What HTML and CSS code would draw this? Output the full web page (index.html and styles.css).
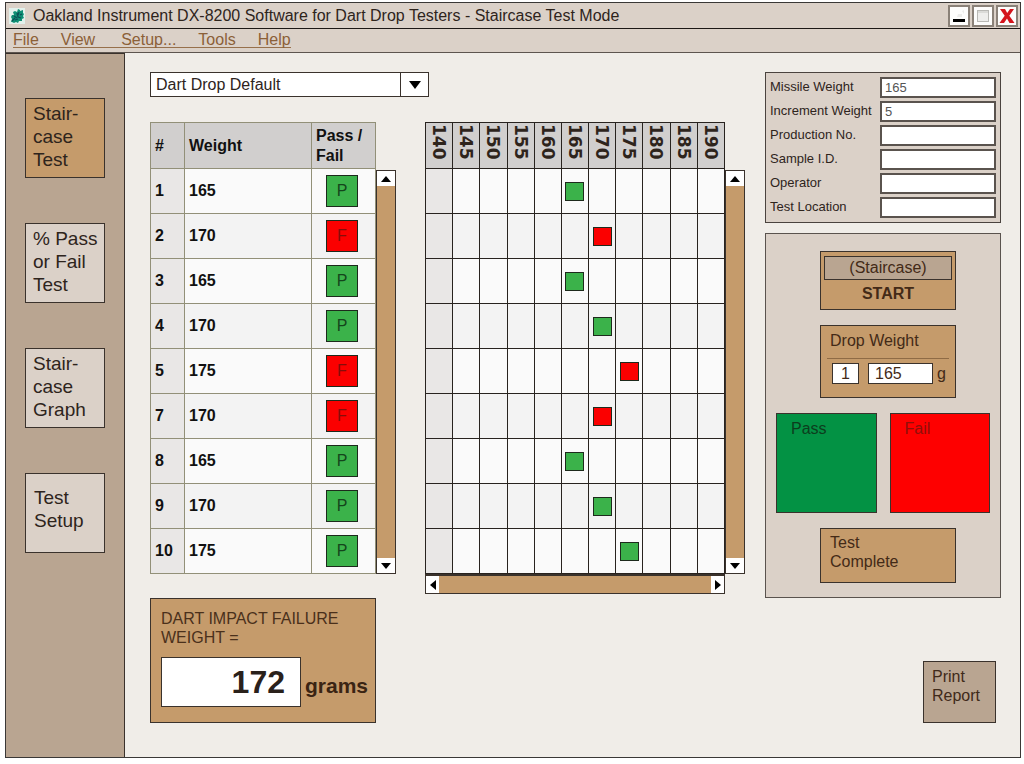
FILE: index.html
```html
<!DOCTYPE html>
<html lang="en">
<head>
<meta charset="utf-8">
<title>Oakland Instrument DX-8200</title>
<link rel="stylesheet" href="styles.css">
</head>
<body>
<div class="window">
  <header class="titlebar">
    <svg class="logo" viewBox="0 0 16 16" aria-hidden="true"><rect width="16" height="16" fill="#e2f1ec"/><path d="M2 14l1-3-1-2 1-2 2 0-1-3 2-1 2 1 1-3 2 1 0 1 3-1 0 3 1 1-1 2 1 2-2 1 0 2-3 0-1 2-2-1-2 1-2-1z" fill="#0e8f74"/><path d="M3 13l3-3M5 8l3 2M8 5l1 4 3 1M10 4l-1 3M6 12l3-1M11 7l2-1" stroke="#0a4f55" stroke-width="1.300" fill="none"/></svg>
    <h1 class="title">Oakland Instrument DX-8200 Software for Dart Drop Testers - Staircase Test Mode</h1>
    <div class="window-buttons">
      <button class="window-button" aria-label="Minimize"><svg viewBox="0 0 18 18"><path d="M8 7h4v3H7zM12 4l2-1v4" fill="#ececea"/><rect x="3" y="12" width="12" height="3" fill="#000"/></svg></button>
      <button class="window-button" aria-label="Maximize"><svg viewBox="0 0 18 18"><rect x="3.5" y="3.5" width="11" height="11" fill="#eeeeec" stroke="#b9b9b5"/><path d="M4 5h10" stroke="#c8c8c4"/></svg></button>
      <button class="window-button" aria-label="Close"><svg viewBox="0 0 18 18"><path d="M2 2h5l2.200 4L12 2h4l-4.700 6.700L16.500 16h-5l-2.500-4.500L6 16H1.500l5.200-7.300z" fill="#d4141c"/></svg></button>
    </div>
  </header>
  <nav class="menubar">
    <div class="menu-items">
      <a href="#">File</a><a href="#">View</a><a class="group-start" href="#">Setup...</a><a href="#">Tools</a><a href="#">Help</a>
    </div>
  </nav>
  <div class="body">
    <aside class="sidebar">
      <button class="mode active">Stair-<br>case<br>Test</button>
      <button class="mode">% Pass<br>or Fail<br>Test</button>
      <button class="mode">Stair-<br>case<br>Graph</button>
      <button class="mode two-line">Test<br>Setup</button>
    </aside>
    <main class="workspace">
      <section class="test">
        <div class="preset">
          <select aria-label="Test preset"><option>Dart Drop Default</option></select>
          <span class="preset-arrow"><svg viewBox="0 0 14 10"><path d="M1 1h12L7 9z"/></svg></span>
        </div>
        <div class="data">
          <div class="results">
            <table class="drops">
              <thead><tr><th class="col-number">#</th><th>Weight</th><th class="col-outcome">Pass / Fail</th></tr></thead>
              <tbody>
                <tr><th>1</th><td>165</td><td><span class="tile pass">P</span></td></tr>
                <tr><th>2</th><td>170</td><td><span class="tile fail">F</span></td></tr>
                <tr><th>3</th><td>165</td><td><span class="tile pass">P</span></td></tr>
                <tr><th>4</th><td>170</td><td><span class="tile pass">P</span></td></tr>
                <tr><th>5</th><td>175</td><td><span class="tile fail">F</span></td></tr>
                <tr><th>7</th><td>170</td><td><span class="tile fail">F</span></td></tr>
                <tr><th>8</th><td>165</td><td><span class="tile pass">P</span></td></tr>
                <tr><th>9</th><td>170</td><td><span class="tile pass">P</span></td></tr>
                <tr><th>10</th><td>175</td><td><span class="tile pass">P</span></td></tr>
              </tbody>
            </table>
            <div class="scroll vertical">
              <button aria-label="Scroll up"><svg viewBox="0 0 10 8"><path d="M0 7h10L5 1z"/></svg></button>
              <button aria-label="Scroll down"><svg viewBox="0 0 10 8"><path d="M0 1h10L5 7z"/></svg></button>
            </div>
          </div>
          <div class="chart">
            <div class="plot">
              <table class="stairs">
                <thead><tr><th><span>140</span></th><th><span>145</span></th><th><span>150</span></th><th><span>155</span></th><th><span>160</span></th><th><span>165</span></th><th><span>170</span></th><th><span>175</span></th><th><span>180</span></th><th><span>185</span></th><th><span>190</span></th></tr></thead>
                <tbody>
                  <tr><td></td><td></td><td></td><td></td><td></td><td><i class="mark pass"></i></td><td></td><td></td><td></td><td></td><td></td></tr>
                  <tr><td></td><td></td><td></td><td></td><td></td><td></td><td><i class="mark fail"></i></td><td></td><td></td><td></td><td></td></tr>
                  <tr><td></td><td></td><td></td><td></td><td></td><td><i class="mark pass"></i></td><td></td><td></td><td></td><td></td><td></td></tr>
                  <tr><td></td><td></td><td></td><td></td><td></td><td></td><td><i class="mark pass"></i></td><td></td><td></td><td></td><td></td></tr>
                  <tr><td></td><td></td><td></td><td></td><td></td><td></td><td></td><td><i class="mark fail"></i></td><td></td><td></td><td></td></tr>
                  <tr><td></td><td></td><td></td><td></td><td></td><td></td><td><i class="mark fail"></i></td><td></td><td></td><td></td><td></td></tr>
                  <tr><td></td><td></td><td></td><td></td><td></td><td><i class="mark pass"></i></td><td></td><td></td><td></td><td></td><td></td></tr>
                  <tr><td></td><td></td><td></td><td></td><td></td><td></td><td><i class="mark pass"></i></td><td></td><td></td><td></td><td></td></tr>
                  <tr><td></td><td></td><td></td><td></td><td></td><td></td><td></td><td><i class="mark pass"></i></td><td></td><td></td><td></td></tr>
                </tbody>
              </table>
              <div class="scroll horizontal">
                <button aria-label="Scroll left"><svg viewBox="0 0 8 10"><path d="M7 0v10L1 5z"/></svg></button>
                <button aria-label="Scroll right"><svg viewBox="0 0 8 10"><path d="M1 0v10l6-5z"/></svg></button>
              </div>
            </div>
            <div class="scroll vertical">
              <button aria-label="Scroll up"><svg viewBox="0 0 10 8"><path d="M0 7h10L5 1z"/></svg></button>
              <button aria-label="Scroll down"><svg viewBox="0 0 10 8"><path d="M0 1h10L5 7z"/></svg></button>
            </div>
          </div>
        </div>
        <div class="impact">
          <label for="impact">DART IMPACT FAILURE WEIGHT =</label>
          <div class="impact-value"><input id="impact" value="172" readonly><span>grams</span></div>
        </div>
      </section>
      <section class="side">
        <form class="details">
          <label for="missile">Missile Weight</label><input id="missile" value="165">
          <label for="increment">Increment Weight</label><input id="increment" value="5">
          <label for="production">Production No.</label><input id="production">
          <label for="sample">Sample I.D.</label><input id="sample">
          <label for="operator">Operator</label><input id="operator">
          <label for="location">Test Location</label><input id="location">
        </form>
        <div class="controls">
          <button class="start"><span class="start-mode">(Staircase)</span><strong>START</strong></button>
          <div class="drop">
            <div class="drop-title" id="drop-title">Drop Weight</div>
            <div class="drop-fields">
              <input class="drop-number" aria-label="Drop number" value="1">
              <input class="drop-weight" aria-labelledby="drop-title" value="165">
              <span>g</span>
            </div>
          </div>
          <div class="verdict">
            <button class="verdict-pass">Pass</button>
            <button class="verdict-fail">Fail</button>
          </div>
          <button class="complete">Test<br>Complete</button>
        </div>
        <button class="print">Print<br>Report</button>
      </section>
    </main>
  </div>
</div>
</body>
</html>
```
FILE: styles.css
```css
* { box-sizing: border-box; }

body {
  margin: 0;
  background: #fff;
  color: #2e241c;
  font: 16px/19px "Liberation Sans", Arial, sans-serif;
}

button, input, select {
  margin: 0;
  border: 1px solid #3a322c;
  border-radius: 0;
  padding: 0;
  color: inherit;
  font: inherit;
}

svg { display: block; }

.window {
  display: flex;
  flex-direction: column;
  min-height: calc(100vh - 8px);
  margin: 2px 3px 0 5px;
  border: 1px solid #3a3836;
  background: #f0ede8;
}

.titlebar {
  display: flex;
  align-items: center;
  height: 26px;
  padding: 0 2px 0 3px;
  border-bottom: 1px solid #1c1815;
  background: #dbd1c8;
}

.logo { width: 16px; height: 16px; }

.title {
  flex: 1;
  margin: 0 0 0 8px;
  font-size: 16px;
  font-weight: 400;
}

.window-buttons { display: flex; gap: 2px; }

.window-button {
  width: 22px;
  height: 22px;
  border: 2px solid #8a8178;
  background: #fdfdfc;
}

.menubar {
  height: 24px;
  padding: 1px 7px;
  border-bottom: 1px solid #5d554f;
  background: #dbd1c8;
}

.menu-items {
  display: inline-flex;
  gap: 22px;
  height: 18px;
  border-bottom: 1px solid #97704b;
}

.menu-items a { color: #8b6038; text-decoration: none; }
.menu-items .group-start { padding-left: 4px; }

.body { display: flex; flex: 1; }

.sidebar {
  display: flex;
  flex-direction: column;
  align-items: center;
  gap: 45px;
  width: 119px;
  padding: 44px 0;
  border-top: 1px solid #3a322c;
  border-right: 1px solid #3a322c;
  background: #b9a591;
}

.mode {
  display: flex;
  align-items: flex-start;
  width: 80px;
  height: 80px;
  padding: 3px 7px;
  background: #dbd1c8;
  font-size: 19px;
  line-height: 23px;
  text-align: left;
  white-space: nowrap;
}

.mode.active { background: #c59b6b; }
.mode.two-line { padding: 12px 8px; }

.workspace {
  display: flex;
  flex: 1;
  gap: 20px;
  padding: 19px 19px 34px 25px;
}

.test { flex: 1; }

.preset { position: relative; width: 279px; height: 25px; }

.preset select {
  width: 100%;
  height: 100%;
  padding: 0 5px;
  appearance: none;
  background: #fff;
}

.preset-arrow {
  position: absolute;
  top: 1px;
  right: 1px;
  bottom: 1px;
  display: flex;
  align-items: center;
  justify-content: center;
  width: 28px;
  border-left: 1px solid #3a322c;
  background: #fff;
  pointer-events: none;
}

.preset-arrow svg { width: 14px; height: 10px; }

.data {
  display: grid;
  grid-template-columns: 246fr 320fr;
  gap: 29px;
  margin-top: 25px;
}

.results, .chart { display: flex; align-items: flex-start; }

table { width: 100%; border-collapse: collapse; table-layout: fixed; }

thead tr { height: 46px; }
tbody tr { height: 45px; }

.drops th, .drops td {
  padding: 0 4px;
  border: 1px solid #929078;
  color: #111;
  font-weight: 700;
  line-height: 20px;
  text-align: left;
}

.drops tbody td { background: #fafafa; }
.drops tbody tr:nth-child(even) td { background: #f3f3f3; }
.drops tbody th { background: #e9e7e6; }
.drops thead th { background: #d1cfce; }
.drops .col-number { width: 34px; }
.drops .col-outcome { width: 64px; }

.tile {
  display: flex;
  align-items: center;
  justify-content: center;
  width: 32px;
  height: 32px;
  margin: 0 10px;
  border: 1px solid #1d2a1c;
  font-weight: 400;
}

.pass { background: #3bb24a; color: #14451b; }
.fail { background: #fb0000; color: #860d0a; }

.scroll {
  display: flex;
  justify-content: space-between;
  border: 1px solid #3a322c;
  background: #c59b6b;
}

.scroll button {
  display: flex;
  align-items: center;
  justify-content: center;
  border: 0;
  background: #fff;
}

.vertical {
  flex: none;
  flex-direction: column;
  width: 20px;
  height: 404px;
  margin-top: 48px;
}

.vertical button { height: 15px; }
.vertical svg { width: 10px; height: 8px; }
.horizontal { height: 20px; border-top-width: 2px; }
.horizontal button { width: 13px; }
.horizontal svg { width: 8px; height: 10px; }

.plot { flex: 1; }

.stairs th, .stairs td { padding: 0; border: 1px solid #28231f; }
.stairs th { background: #d1cfce; vertical-align: top; }
.stairs td { background: #fafafa; }
.stairs tbody tr:nth-child(even) td { background: #f3f3f3; }
.stairs tbody tr td:first-child { background: #e9e7e6; }
.stairs tbody tr:nth-child(even) td:first-child { background: #e9e7e6; }

.stairs span {
  display: block;
  margin: 1px auto 0;
  font: 700 17px/20px "DejaVu Sans", Verdana, sans-serif;
  writing-mode: vertical-rl;
}

.mark {
  display: block;
  width: 19px;
  height: 19px;
  margin: 0 auto;
  border: 1px solid #1d2a1c;
}

.impact {
  width: 226px;
  height: 125px;
  margin-top: 4px;
  padding: 10px;
  border: 1px solid #3a322c;
  background: #c59b6b;
  color: #4a301b;
}

.impact label { display: block; }

.impact-value {
  display: flex;
  align-items: center;
  gap: 4px;
  margin-top: 10px;
}

.impact-value input {
  width: 140px;
  height: 50px;
  padding: 0 15px;
  background: #fff;
  color: #2a211b;
  font-size: 32px;
  font-weight: 700;
  text-align: right;
}

.impact-value span {
  padding-top: 6px;
  color: #3a2413;
  font-size: 21px;
  font-weight: 700;
}

.side { display: flex; flex-direction: column; gap: 10px; width: 236px; }

.details {
  display: grid;
  grid-template-columns: 1fr 116px;
  grid-auto-rows: 21px;
  gap: 3px 0;
  padding: 4px;
  border: 1px solid #4a433e;
  background: #dbd1c8;
  font-size: 13px;
}

.details input {
  width: 100%;
  padding: 0 3px;
  border: 2px solid #5a534e;
  background: #fff;
  color: #555;
}

.controls {
  display: flex;
  flex-direction: column;
  align-items: center;
  gap: 15px;
  padding: 17px 10px 14px;
  border: 1px solid #5a534e;
  background: #dbd1c8;
  color: #432a17;
}

.start, .drop, .complete {
  width: 136px;
  margin-left: 10px;
  border: 1px solid #3a322c;
  background: #c59b6b;
}

.start {
  display: flex;
  flex-direction: column;
  align-items: center;
  gap: 4px;
  height: 59px;
  padding: 4px 3px;
}

.start-mode {
  width: 100%;
  border: 1px solid #3a322c;
  background: #b9a591;
  line-height: 22px;
}

.drop { height: 73px; padding: 5px 6px; }

.drop-title {
  padding: 0 3px 8px;
  border-bottom: 1px solid #8f6b45;
}

.drop-fields {
  display: flex;
  align-items: center;
  gap: 9px;
  padding: 4px 0 0 5px;
}

.drop-fields span { margin-left: -5px; }
.drop-number, .drop-weight { height: 21px; background: #fff; }
.drop-number { width: 27px; text-align: center; }
.drop-weight { width: 65px; padding: 0 6px; }

.verdict { display: flex; gap: 13px; width: 100%; }

.verdict button {
  display: flex;
  align-items: flex-start;
  flex: 1;
  height: 100px;
  padding: 5px 14px;
}

.verdict-pass { background: #039244; color: #0c3d1d; }
.verdict-fail { background: #fe0000; color: #8f0f0a; }

.complete {
  display: flex;
  align-items: flex-start;
  height: 55px;
  padding: 4px 9px;
  text-align: left;
}

.print {
  display: flex;
  align-items: flex-start;
  align-self: flex-end;
  width: 73px;
  height: 62px;
  margin: auto 5px 0 0;
  padding: 5px 8px;
  background: #b9a591;
  color: #3f2a1a;
  text-align: left;
}
```
